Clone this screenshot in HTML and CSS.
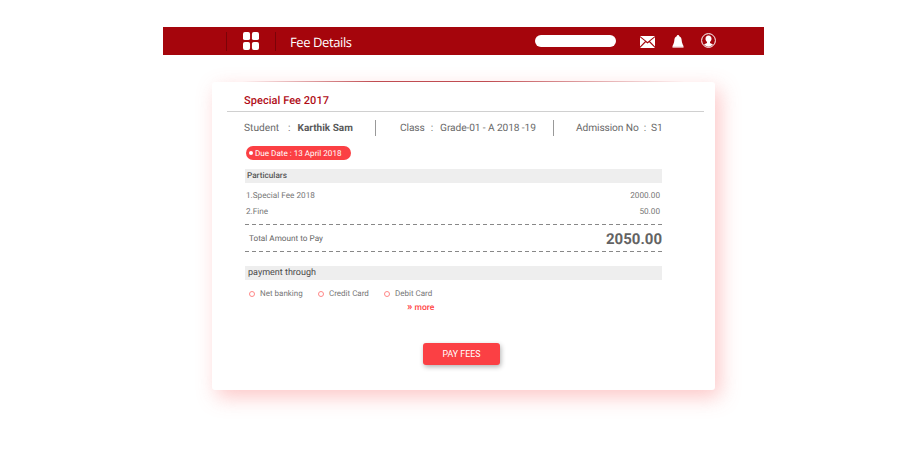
FILE: index.html
```html
<!DOCTYPE html>
<html lang="en">
<head>
<meta charset="utf-8">
<title>Fee Details</title>
<link rel="stylesheet" href="styles.css">
</head>
<body>
<header class="topbar">
  <span class="bar-sep bar-sep-first"></span>
  <svg class="apps" width="16" height="18" viewBox="0 0 17 19"><rect x="0" y="0" width="7.5" height="8.5" rx="2"/><rect x="9.5" y="0" width="7.5" height="8.5" rx="2"/><rect x="0" y="10.5" width="7.5" height="8.5" rx="2"/><rect x="9.5" y="10.5" width="7.5" height="8.5" rx="2"/></svg>
  <span class="bar-sep bar-sep-second"></span>
  <h1 class="bar-title">Fee Details</h1>
  <span class="search"></span>
  <svg class="ic-mail" width="15" height="12" viewBox="0 0 15 12"><path d="M0 0h15L7.5 6z" fill="#fff"/><path d="M0 1.2 5 5.3 0 10.6zM15 1.2 10 5.3 15 10.6zM0 12 5.8 6.200 7.500 7.600 9.200 6.200 15 12z" fill="#fff"/></svg>
  <svg class="ic-bell" width="12" height="13" viewBox="0 0 13 14"><path d="M6.500 0C7.400 0 7.800.7 7.900 1.300 9.700 2 10.300 3.700 10.500 6 10.700 8.500 11.700 10.500 12.500 12H.5C1.300 10.500 2.300 8.500 2.500 6 2.700 3.700 3.300 2 5.100 1.300 5.200.7 5.600 0 6.500 0z" fill="#fff"/><rect x="0.500" y="12" width="12" height="1.600" fill="#fff"/></svg>
  <svg class="ic-user" width="15" height="15" viewBox="0 0 15 15"><circle cx="7.500" cy="7.500" r="6.900" fill="none" stroke="#fff" stroke-width="1"/><path d="M7.500 2.600c1.900 0 3 1.400 3 3.200 0 1.300-.6 2.500-1.500 3.100v1.100c1 .5 2.200.9 3 1.600A6.200 6.200 0 0 1 7.500 13.700 6.200 6.200 0 0 1 3 11.600c.8-.7 2-1.100 3-1.600V8.900C5.100 8.300 4.500 7.100 4.500 5.800c0-1.800 1.100-3.200 3-3.200z" fill="#fff"/></svg>
</header>

<main class="card">
  <h2 class="card-title">Special Fee 2017</h2>
  <div class="info">
    <span class="info-student">Student<span class="colon-a">:</span><b>Karthik Sam</b></span>
    <span class="info-sep"></span>
    <span class="info-class">Class<span class="colon-b">:</span>Grade-01 - A 2018 -19</span>
    <span class="info-sep"></span>
    <span class="info-adm">Admission No<span class="colon-c">:</span>S1</span>
  </div>
  <div class="badge"><span class="badge-dot"></span>Due Date : 13 April 2018</div>
  <div class="section-head">Particulars</div>
  <div class="fee-row fee-row-first"><span>1.Special Fee 2018</span><span>2000.00</span></div>
  <div class="fee-row fee-row-second"><span>2.Fine</span><span>50.00</span></div>
  <div class="total">
    <span class="total-label">Total Amount to Pay</span>
    <span class="total-value">2050.00</span>
  </div>
  <div class="section-head section-pay">payment through</div>
  <div class="methods">
    <span class="method method-a"><i class="radio"></i>Net banking</span>
    <span class="method method-b"><i class="radio"></i>Credit Card</span>
    <span class="method"><i class="radio"></i>Debit Card</span>
  </div>
  <div class="more"><span class="more-mark">»</span> more</div>
  <button class="pay" type="button">PAY FEES</button>
</main>
</body>
</html>
```
FILE: styles.css
```css
* { box-sizing: border-box; }
html, body { margin: 0; padding: 0; background: #fff; }
body { width: 920px; height: 460px; overflow: hidden; font-family: Roboto, "Liberation Sans", sans-serif; color: #666; text-rendering: geometricPrecision; }

.topbar { display: flex; align-items: center; width: 601px; height: 28px; margin: 27px 0 0 163px; background: #a5050c; }
.bar-sep { width: 1px; height: 19px; background: #7c0308; }
.bar-sep-first { margin-left: 63px; }
.apps { margin-left: 16px; fill: #fff; }
.bar-sep-second { margin-left: 16px; }
.bar-title { margin: 1px 0 0 14px; font-family: "Open Sans", sans-serif; font-size: 13px; font-weight: 400; color: #fff; letter-spacing: -.4px; line-height: 18px; width: 245px; }
.search { width: 81px; height: 12px; margin-top: -1px; border-radius: 6px; background: #fff; }
.ic-mail { margin: 1px 0 0 24px; }
.ic-bell { margin: 0 0 0 17px; }
.ic-user { margin: -2px 0 0 17px; }

.card { display: flow-root; position: relative; width: 503px; height: 308px; margin: 27px 0 0 212px; padding: 0 53px 0 32px; background: #fff; border-radius: 3px; box-shadow: 5px 7px 20px rgba(250, 100, 100, .36); }
.card::before { content: ""; position: absolute; top: -1px; left: 30px; right: 30px; height: 1px; background: linear-gradient(90deg, rgba(165,5,12,0), rgba(165,5,12,.7) 30%, rgba(165,5,12,.7) 55%, rgba(165,5,12,0)); }
.card-title { position: relative; margin: 12px 0 0 0; padding-bottom: 3px; font-size: 11px; line-height: 14px; font-weight: 500; color: #b00d17; letter-spacing: .05px; }
.card-title::after { content: ""; position: absolute; left: -17px; right: -42px; bottom: -1px; height: 1px; background: #d0d0d0; }

.info { display: flex; align-items: center; height: 16px; margin-top: 9px; font-size: 10.200px; white-space: nowrap; color: #6a6a6a; }
.info > span { flex: none; }
.info-student b { font-weight: 700; font-size: 10px; color: #5a5a5a; }
.colon-a { margin: 0 7px 0 9px; }
.info-student { width: 131px; }
.info-sep { width: 1px; height: 16px; background: #999; }
.info-class { margin-left: 24px; width: 153px; letter-spacing: -.1px; }
.colon-b { margin: 0 7px 0 6px; }
.info-adm { margin-left: 22px; letter-spacing: -.1px; }
.colon-c { margin: 0 5px 0 5px; }

.badge { display: flex; align-items: center; width: 105px; height: 14px; margin: 10px 0 0 2px; padding-left: 3px; border-radius: 7px; background: #fb4044; color: #fff; font-size: 8.100px; white-space: nowrap; }
.badge-dot { width: 4px; height: 4px; margin-right: 2px; border-radius: 50%; background: #fff; }

.section-head { width: 417px; height: 14px; margin: 9px 0 0 1px; padding-left: 2px; background: #eee; font-size: 8.200px; font-weight: 500; line-height: 14px; color: #555; }
.section-pay { margin-top: 14px; padding-left: 3px; font-size: 9px; line-height: 14px; color: #4a4a4a; font-weight: 400; }

.fee-row { display: flex; justify-content: space-between; width: 414px; margin-left: 2px; font-size: 8.200px; line-height: 12px; color: #777; }
.fee-row-first { margin-top: 7px; }
.fee-row-second { margin-top: 4px; }

.total { display: flex; justify-content: space-between; align-items: center; width: 417px; height: 28px; margin: 6px 0 0 1px; padding-left: 4px; background-image: repeating-linear-gradient(90deg, #888 0 4px, transparent 4px 7px), repeating-linear-gradient(90deg, #888 0 4px, transparent 4px 7px); background-size: 100% 1px; background-position: 0 0, 0 100%; background-repeat: no-repeat; }
.total-label { padding-top: 2px; font-size: 8.200px; color: #666; }
.total-value { padding-top: 1px; font-size: 15px; font-weight: 700; color: #636363; }

.methods { display: flex; margin: 8px 0 0 5px; font-size: 8px; line-height: 12px; color: #777; }
.method { display: flex; align-items: center; white-space: nowrap; }
.method-a { width: 69px; }
.method-b { width: 66px; }
.radio { width: 6px; height: 6px; margin-right: 5px; border: 1px solid #f88; border-radius: 50%; }

.more { margin: 2px 0 0 163px; font-size: 8.500px; line-height: 12px; font-weight: 500; color: #f44; }
.more-mark { font-size: 11px; line-height: 10px; }

.pay { display: block; width: 77px; height: 22px; margin: 29px 0 0 179px; padding: 0; border: 0; border-radius: 3px; background: #fb4044; color: #fff; font-family: Roboto, sans-serif; font-size: 8.800px; font-weight: 400; box-shadow: 1px 2px 5px rgba(0,0,0,.3); }
```
